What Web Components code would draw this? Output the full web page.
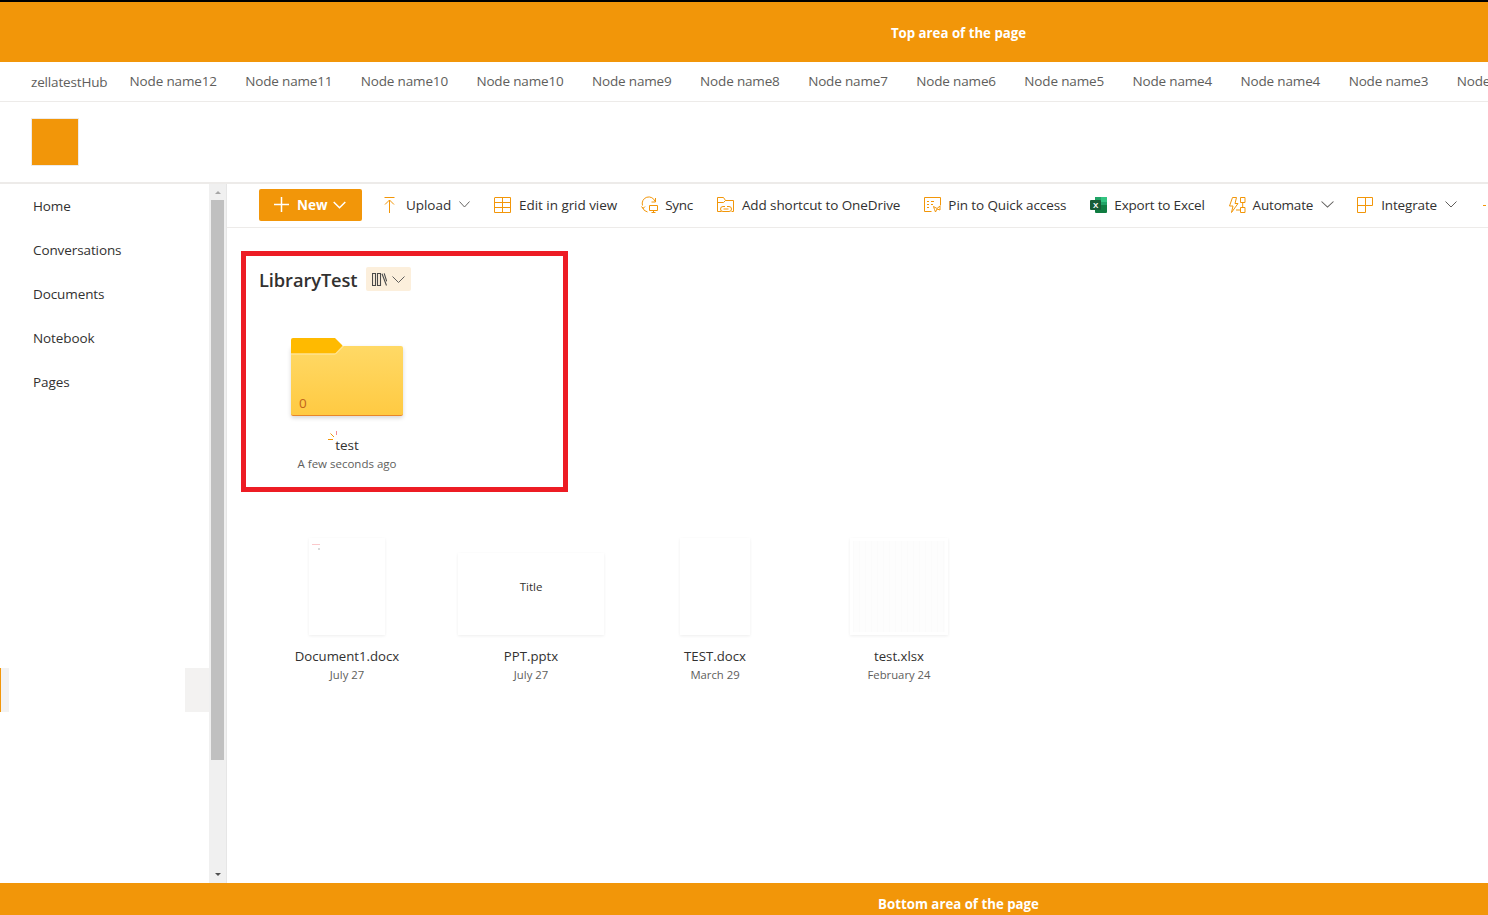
<!DOCTYPE html>
<html lang="en">
<head>
<meta charset="utf-8">
<title>LibraryTest</title>
<style>
  html, body { margin: 0; height: 100%; overflow: hidden; background: #fff; }
  body { font-family: "Open Sans", "Liberation Sans", sans-serif; color: #323130; }
</style>
</head>
<body>
<app-shell>
  <page-banner slot="top" kind="top">Top area of the page</page-banner>
  <site-nav slot="nav">
    <span class="hub">zellatestHub</span>
  </site-nav>
  <site-header slot="header"></site-header>
  <side-nav slot="side"></side-nav>
  <command-bar slot="commands"></command-bar>
  <library-view slot="content"></library-view>
  <page-banner slot="bottom" kind="bottom">Bottom area of the page</page-banner>
</app-shell>

<script>
const ORANGE = '#f29609';
const FONT = '"Open Sans", "Liberation Sans", sans-serif';

const ICONS = {
  upload: `<path d="M2.5 .5h10M7.5 16V3M3 7.5 7.5 3 12 7.5"/>`,
  grid: `<path d="M1 .5h15.5v15H.5V.5M.5 5.5h16M.5 10.5h16M8.5 .5v15"/>`,
  sync: `<path d="M1.5 8.5A6.5 6.5 0 0 1 14 4.5M14.5 1v4h-4M.5 9.5l1.5 2 2-2M1.5 10A6.5 6.5 0 0 0 6.5 15"/><path d="M8.5 8.5h8v5h-8zM12.5 13.5v2M10.5 15.5h4"/>`,
  shortcut: `<path d="M4.5 14.5h-4V.5h6l2 3h8v11h-2M.5 5.5h6l2-2"/><path d="M8 9.5H6a2.5 2.5 0 0 0 0 5h6a2.5 2.5 0 0 0 0-5h-2M6.5 12h5"/>`,
  pin: `<path d="M7.5 14.5h-7V.5h16v8"/><path d="M3 4.5h2M3 7.5h2M3 10.5h2M7 4.5h3M7 7.5h2"/><path d="M9.5 9.5l3.5 2 3-2.5v4l-3-1-1.5 3-1-2.5z"/>`,
  automate: `<path d="M7.5 .5h-4L.5 9h3.5L2.5 15.5 9 6.5H6z"/><path d="M11.5 .5H16v5h-4.500zM11.500 10.500H16v5h-4.500zM13.700 5.500v5M7 13h4.500"/>`,
  integrate: `<path d="M.5 .5h15v8h-7v7h-8zM8.500 .5v8M.5 8.500h8"/>`,
  more: `<path d="M2 8.500h3"/>`
};

class AppShell extends HTMLElement {
  constructor() {
    super();
    this.attachShadow({ mode: 'open' }).innerHTML = `
      <style>
        :host { display: grid; height: 915px; width: 1488px; overflow: hidden;
                grid-template-columns: 227px 1fr; grid-template-rows: 62px 40px 82px 1fr 32px; }
        ::slotted([slot=top]), ::slotted([slot=nav]), ::slotted([slot=header]), ::slotted([slot=bottom]) { grid-column: 1 / 3; }
        .main { display: flex; flex-direction: column; min-width: 0; min-height: 0; overflow: hidden; }
      </style>
      <slot name="top"></slot>
      <slot name="nav"></slot>
      <slot name="header"></slot>
      <slot name="side"></slot>
      <div class="main"><slot name="commands"></slot><slot name="content"></slot></div>
      <slot name="bottom"></slot>`;
  }
}

class PageBanner extends HTMLElement {
  constructor() {
    super();
    this.attachShadow({ mode: 'open' }).innerHTML = `
      <style>
        :host { display: flex; align-items: center; justify-content: center; box-sizing: border-box;
                background: ${ORANGE}; color: #fff; font: 700 13.25px ${FONT}; padding-left: 429px; }
        :host([kind=top]) { border-top: 2px solid #000; padding-top: 2px; }
        :host([kind=bottom]) { padding-top: 10px; }
      </style>
      <slot></slot>`;
  }
}

class SiteNav extends HTMLElement {
  constructor() {
    super();
    const names = ['Node name12', 'Node name11', 'Node name10', 'Node name10', 'Node name9', 'Node name8',
      'Node name7', 'Node name6', 'Node name5', 'Node name4', 'Node name4', 'Node name3', 'Node name2'];
    this.attachShadow({ mode: 'open' }).innerHTML = `
      <style>
        :host { display: flex; align-items: center; box-sizing: border-box; height: 40px; padding: 0 0 2px 31px;
                border-bottom: 1px solid #edebe9; overflow: hidden; white-space: nowrap;
                font: 13.5px ${FONT}; letter-spacing: -.16px; color: #605e5c; }
        ::slotted(.hub) { margin-right: 21.6px; position: relative; top: 1px; width: 77px; flex: none; }
        a { flex: none; margin-right: 28.1px; width: 80px; color: inherit; }
        a.long { width: 87.5px; }
      </style>
      <slot></slot>
      ${names.map(n => `<a class="${n.length > 10 ? 'long' : ''}">${n}</a>`).join('')}`;
  }
}

class SiteHeader extends HTMLElement {
  constructor() {
    super();
    this.attachShadow({ mode: 'open' }).innerHTML = `
      <style>
        :host { display: flex; align-items: center; box-sizing: border-box; height: 82px; padding: 0 0 0 31px;
                border-bottom: 2px solid #edebe9; }
        .logo { width: 46px; height: 46px; background: ${ORANGE}; border: 1px solid #edebe9; }
      </style>
      <div class="logo"></div>`;
  }
}

class NavLink extends HTMLElement {
  constructor() {
    super();
    this.attachShadow({ mode: 'open' }).innerHTML = `
      <style>
        :host { display: flex; align-items: center; height: 44px; padding-left: 33px; font-size: 13.5px; letter-spacing: -.1px; color: #323130; }
        :host([selected]) { padding: 0; background: #f3f2f1; border-left: 1px solid ${ORANGE}; box-sizing: border-box; }
        :host([selected]) .cover { margin-left: 8px; width: 176px; height: 44px; background: #fff; }
      </style>
      <slot></slot><div class="cover"></div>`;
  }
}

class SideScroll extends HTMLElement {
  constructor() {
    super();
    this.attachShadow({ mode: 'open' }).innerHTML = `
      <style>
        :host { display: flex; flex-direction: column; align-items: center; width: 17px; background: #f0f0f0;
                border-right: 1px solid #e6e6e6; }
        .btn { height: 16px; width: 100%; display: flex; align-items: center; justify-content: center; flex: none; }
        .thumb { width: 13px; height: 560px; background: #c0c0c0; flex: none; }
        .rest { flex: 1; }
        i { display: block; width: 0; height: 0; border: 3.5px solid transparent; }
        .up { border-bottom-color: #a6a6a6; border-top-width: 0; }
        .down { border-top-color: #505050; border-bottom-width: 0; margin-bottom: 2px; }
      </style>
      <div class="btn"><i class="up"></i></div>
      <div class="thumb"></div>
      <div class="rest"></div>
      <div class="btn"><i class="down"></i></div>`;
  }
}

class SideNav extends HTMLElement {
  constructor() {
    super();
    this.attachShadow({ mode: 'open' }).innerHTML = `
      <style>
        :host { display: flex; min-height: 0; }
        nav { flex: 1; display: flex; flex-direction: column; min-width: 0; }
        .gap { height: 264px; flex: none; }
      </style>
      <nav>
        <nav-link>Home</nav-link>
        <nav-link>Conversations</nav-link>
        <nav-link>Documents</nav-link>
        <nav-link>Notebook</nav-link>
        <nav-link>Pages</nav-link>
        <div class="gap"></div>
        <nav-link selected></nav-link>
      </nav>
      <side-scroll></side-scroll>`;
  }
}

class CmdItem extends HTMLElement {
  constructor() {
    super();
    const icon = this.getAttribute('icon');
    const wide = this.getAttribute('w') || 17;
    const gap = this.getAttribute('gap') || 7;
    const chev = this.getAttribute('menu');
    this.attachShadow({ mode: 'open' }).innerHTML = `
      <style>
        :host { display: flex; align-items: center; flex: none; margin-left: 24px; color: #323130; font-size: 13.5px; letter-spacing: -.05px; }
        svg.ic { fill: none; stroke: ${ORANGE}; stroke-width: 1; margin-right: ${gap}px; flex: none; overflow: visible; }
        svg.ch { fill: none; stroke: #605e5c; stroke-width: 1; margin-left: 8px; }
        ::slotted(svg) { margin-right: ${gap}px; flex: none; }
      </style>
      ${icon ? `<svg class="ic" width="${wide}" height="16" viewBox="0 0 ${wide} 16">${ICONS[icon]}</svg>` : '<slot name="icon"></slot>'}
      <slot></slot>
      ${chev ? `<svg class="ch" width="${chev}" height="7" viewBox="0 0 12 7" preserveAspectRatio="none"><path d="M.5 .5 6 6l5.5-5.5"/></svg>` : ''}`;
  }
}

class CommandBar extends HTMLElement {
  constructor() {
    super();
    this.attachShadow({ mode: 'open' }).innerHTML = `
      <style>
        :host { display: flex; align-items: center; box-sizing: border-box; height: 44px; flex: none;
                padding: 0 0 2px 32px; border-bottom: 1px solid #edebe9; overflow: hidden; white-space: nowrap; }
        button { display: flex; align-items: center; flex: none; width: 103px; height: 32px; box-sizing: border-box;
                 padding: 0 0 0 15px; background: ${ORANGE}; border: 0; border-radius: 2px; color: #fff;
                 font: 700 13.5px ${FONT}; }
        button svg { fill: none; stroke: #fff; }
        .plus { margin-right: 8px; stroke-width: 1.5; }
        .down { margin-left: 5px; stroke-width: 1.5; }
        .first { margin-left: 20px; }
      </style>
      <button>
        <svg class="plus" width="15" height="15" viewBox="0 0 15 15"><path d="M7.5 0v15M0 7.5h15"/></svg>New
        <svg class="down" width="13" height="8" viewBox="0 0 13 8"><path d="M.7 1 6.5 6.8 12.3 1"/></svg>
      </button>
      <cmd-item class="first" icon="upload" w="16" gap="8" menu="11">Upload</cmd-item>
      <cmd-item icon="grid" gap="8">Edit in grid view</cmd-item>
      <cmd-item icon="sync" style="letter-spacing:-.3px">Sync</cmd-item>
      <cmd-item icon="shortcut" gap="8" style="letter-spacing:-.09px">Add shortcut to OneDrive</cmd-item>
      <cmd-item icon="pin" style="letter-spacing:-.1px">Pin to Quick access</cmd-item>
      <cmd-item gap="7" style="letter-spacing:-.2px">
        <svg slot="icon" width="17" height="16" viewBox="0 0 17 16">
          <path fill="#21a366" d="M5 0h11a1 1 0 0 1 1 1v7H5z"/>
          <path fill="#33c481" d="M11 0h5a1 1 0 0 1 1 1v4h-6z"/>
          <path fill="#107c41" d="M5 8h12v7a1 1 0 0 1-1 1H6a1 1 0 0 1-1-1z"/>
          <rect y="3" width="11" height="10" rx="1" fill="#185c37"/>
          <text x="5.5" y="11" text-anchor="middle" fill="#fff" font-family="Liberation Sans" font-weight="700" font-size="8">X</text>
        </svg>
        Export to Excel
      </cmd-item>
      <cmd-item icon="automate" menu="13" style="letter-spacing:-.2px">Automate</cmd-item>
      <cmd-item icon="integrate" w="16" gap="8" menu="12" style="margin-left:23px;letter-spacing:-.15px">Integrate</cmd-item>
      <cmd-item icon="more"></cmd-item>`;
  }
}

class FolderTile extends HTMLElement {
  constructor() {
    super();
    this.attachShadow({ mode: 'open' }).innerHTML = `
      <style>
        :host { display: flex; flex-direction: column; align-items: center; width: 112px; }
        .folder { position: relative; width: 112px; height: 78px; }
        .body { position: absolute; inset: 8px 0 0 0; border-radius: 2px; background: linear-gradient(#ffd966, #ffca42);
                border-bottom: 1px solid #e8862a; box-sizing: border-box; box-shadow: 0 2px 4px rgba(0,0,0,.16); }
        svg.tab { position: absolute; left: 0; top: 0; }
        .count { position: absolute; left: 8px; bottom: 5px; font-size: 13.5px; line-height: 16px; color: #c2651a; }
        .name { position: relative; margin-top: 20px; font-size: 13.5px; line-height: 19px; color: #323130; }
        .spark { position: absolute; left: -7px; top: -5px; }
        .sub { margin-top: 0; font-size: 11.5px; line-height: 17px; color: #605e5c; white-space: nowrap; }
      </style>
      <div class="folder">
        <div class="body"></div>
        <svg class="tab" width="53" height="17" viewBox="0 0 53 17">
          <path d="M0 2a2 2 0 0 1 2-2h42l7.5 7.5L44 15.5H0z" fill="#ffba00"/>
          <path d="M0 16h44.5l8-8" fill="none" stroke="#ffe9a8" stroke-width="1"/>
        </svg>
        <span class="count"><slot name="count"></slot></span>
      </div>
      <div class="name">
        <svg class="spark" width="10" height="10" viewBox="0 0 10 10" fill="none">
          <path d="M0 8.5h5" stroke="#f29609"/><path d="M2.5 2.5l3.5 3.5" stroke="#f29609"/><path d="M8.5 0v4" stroke="#f28b92"/>
        </svg>
        <slot name="name"></slot>
      </div>
      <div class="sub"><slot name="sub"></slot></div>`;
  }
}

class FileTile extends HTMLElement {
  constructor() {
    super();
    this.attachShadow({ mode: 'open' }).innerHTML = `
      <style>
        :host { display: flex; flex-direction: column; align-items: center; width: 184px; }
        .slotbox { height: 97px; display: flex; align-items: flex-end; }
        .thumb { position: relative; box-sizing: border-box; background: #fff; box-shadow: 0 1px 3px rgba(0,0,0,.07); display: flex; align-items: center; justify-content: center;
                 width: var(--w); height: var(--h); padding-bottom: 16px; font-size: 11.5px; color: #323130; }
        :host([sheet]) .thumb::before { content: ""; position: absolute; inset: 3px;
          background: repeating-linear-gradient(90deg, #fbfbfb 0 1px, #fdfdfd 1px 6px); }
        :host([marked]) .thumb::before { content: ""; position: absolute; left: 3px; top: 6px; width: 8px; height: 1px; background: #fbc9cb; }
        :host([marked]) .thumb::after { content: ""; position: absolute; left: 9px; top: 10px; width: 2px; height: 2px; background: #d8d8d8; }
        .name { margin-top: 12px; font-size: 13.2px; line-height: 19px; color: #323130; }
        .date { font-size: 11.3px; line-height: 18px; color: #605e5c; }
      </style>
      <div class="slotbox"><div class="thumb"><slot name="thumb"></slot></div></div>
      <div class="name"><slot name="name"></slot></div>
      <div class="date"><slot name="date"></slot></div>`;
  }
}

class LibraryCard extends HTMLElement {
  constructor() {
    super();
    this.attachShadow({ mode: 'open' }).innerHTML = `
      <style>
        :host { display: block; box-sizing: border-box; width: 327px; height: 241px; border: 5px solid #ed1c24; padding: 8px 0 0 13px; }
        .head { display: flex; align-items: center; height: 32px; }
        h2 { margin: 0 9px 2px 0; font: 600 18.3px ${FONT}; letter-spacing: -.1px; color: #323130; }
        .pick { display: flex; align-items: center; gap: 5px; width: 45px; height: 24px; margin-bottom: 2px; box-sizing: border-box; padding-left: 6px; background: #fcefdc; border-radius: 2px; }
        svg { fill: none; stroke: #4a4a4a; stroke-width: 1.1; }
        .pick .chev { stroke: #605e5c; stroke-width: 1; }
        .tile { margin: 42px 0 0 32px; }
      </style>
      <div class="head">
        <h2>LibraryTest</h2>
        <div class="pick">
          <svg width="15" height="13" viewBox="0 0 15 13"><path d="M.5 .5h3v12h-3zM5.5 .5h3v12h-3zM10 .8l4.500 11.700M12.200 .3l2.500 8"/></svg>
          <svg class="chev" width="13" height="7" viewBox="0 0 13 7"><path d="M.5 .5l6 6 6-6"/></svg>
        </div>
      </div>
      <div class="tile"><slot></slot></div>`;
  }
}

class LibraryView extends HTMLElement {
  constructor() {
    super();
    this.attachShadow({ mode: 'open' }).innerHTML = `
      <style>
        :host { display: block; padding: 23px 0 0 14px; }
        .files { display: flex; margin: 46px 0 0 14px; }
      </style>
      <library-card>
        <folder-tile>
          <span slot="count">0</span>
          <span slot="name">test</span>
          <span slot="sub">A few seconds ago</span>
        </folder-tile>
      </library-card>
      <div class="files">
        <file-tile marked style="--w:76px;--h:97px"><span slot="name">Document1.docx</span><span slot="date">July 27</span></file-tile>
        <file-tile style="--w:146px;--h:82px"><span slot="thumb">Title</span><span slot="name">PPT.pptx</span><span slot="date">July 27</span></file-tile>
        <file-tile style="--w:70px;--h:97px"><span slot="name">TEST.docx</span><span slot="date">March 29</span></file-tile>
        <file-tile sheet style="--w:98px;--h:97px"><span slot="name">test.xlsx</span><span slot="date">February 24</span></file-tile>
      </div>`;
  }
}

customElements.define('app-shell', AppShell);
customElements.define('page-banner', PageBanner);
customElements.define('site-nav', SiteNav);
customElements.define('site-header', SiteHeader);
customElements.define('nav-link', NavLink);
customElements.define('side-scroll', SideScroll);
customElements.define('side-nav', SideNav);
customElements.define('cmd-item', CmdItem);
customElements.define('command-bar', CommandBar);
customElements.define('folder-tile', FolderTile);
customElements.define('file-tile', FileTile);
customElements.define('library-card', LibraryCard);
customElements.define('library-view', LibraryView);
</script>
</body>
</html>
